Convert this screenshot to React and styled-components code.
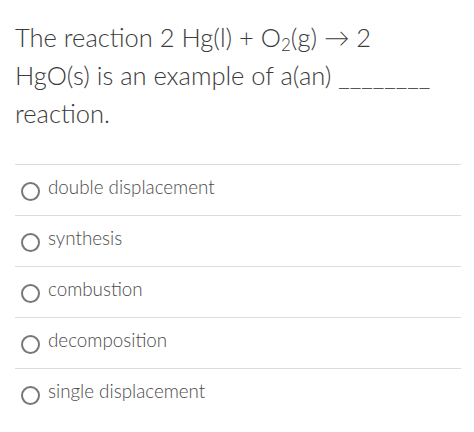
import React from 'react';
import styled, { createGlobalStyle } from 'styled-components';

const GlobalStyle = createGlobalStyle`
  body {
    margin: 0;
    background: #fff;
    font-family: Lato, "Open Sans", sans-serif;
  }
`;

const Page = styled.div`
  padding: 18px 13px 0 15px;
`;

const Question = styled.p`
  margin: 0 0 32px;
  max-width: 436px;
  font-size: 25.5px;
  line-height: 38px;
  color: #3b3b3b;
  font-weight: 300;
`;

const Sub = styled.sub`
  font-size: 17px;
  vertical-align: -4px;
  line-height: 0;
`;

const Blank = styled.span`
  color: #555;
`;

const Options = styled.div`
  display: flex;
  flex-direction: column;
`;

const Row = styled.label`
  display: flex;
  align-items: flex-start;
  gap: 8px;
  height: 51px;
  box-sizing: border-box;
  padding: 11px 0 0 6px;
  border-top: 1px solid #dcdcdc;
  cursor: pointer;
`;

const Radio = styled.span`
  flex: none;
  width: 19px;
  height: 19px;
  box-sizing: border-box;
  margin-top: 6px;
  border: 2px solid #777;
  border-radius: 50%;
`;

const Label = styled.span`
  font-size: 18.8px;
  line-height: 22px;
  font-weight: 300;
  color: #4a4a4a;
`;

const choices = [
  'double displacement',
  'synthesis',
  'combustion',
  'decomposition',
  'single displacement',
];

const App = () => (
  <>
    <GlobalStyle />
    <Page>
      <Question>
        The reaction 2 Hg(l) + O<Sub>2</Sub>(g) → 2 HgO(s) is an example of a(an) <Blank>________</Blank> reaction.
      </Question>
      <Options>
        {choices.map(c => (
          <Row key={c}>
            <Radio />
            <Label>{c}</Label>
          </Row>
        ))}
      </Options>
    </Page>
  </>
);

export default App;
